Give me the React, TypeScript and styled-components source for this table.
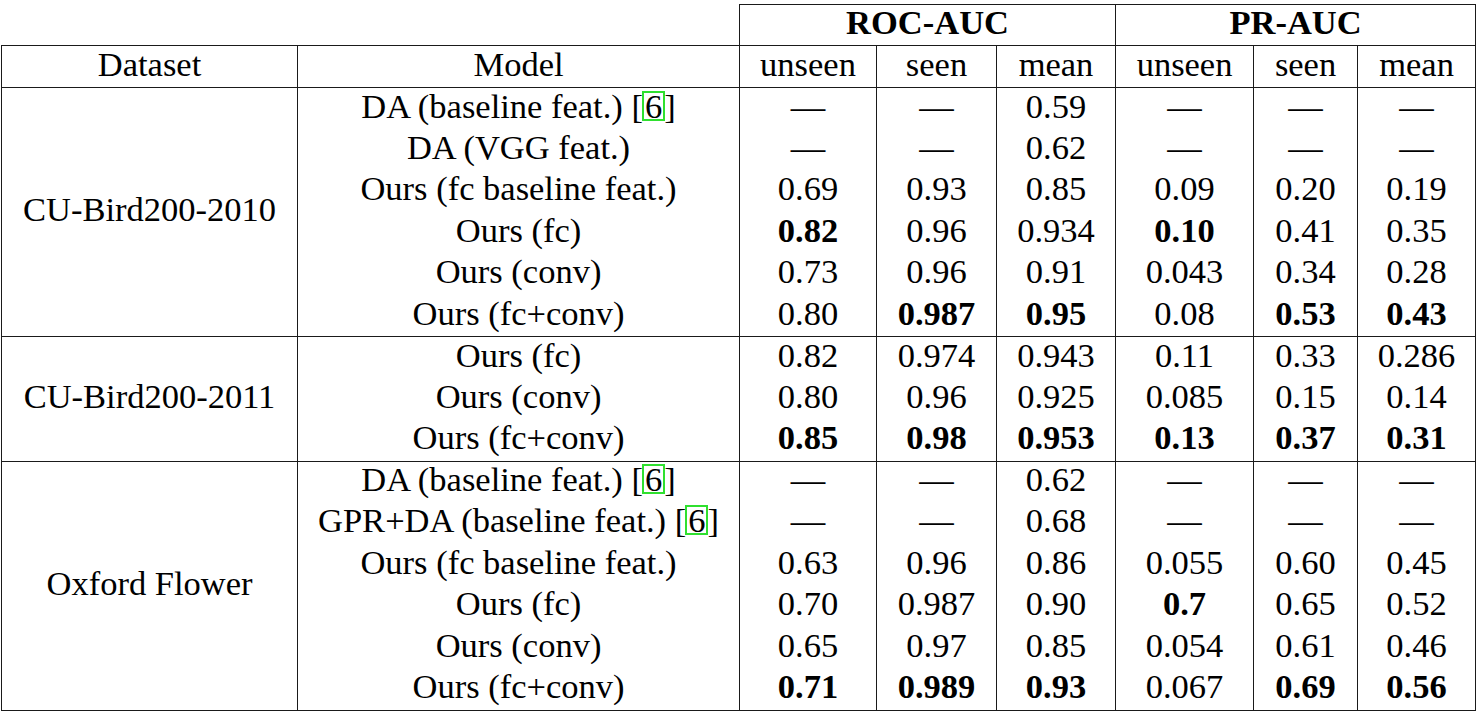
import React from 'react';
import styled, { createGlobalStyle } from 'styled-components';

interface ModelRow {
  model: string;
  cite?: string;
  values: string[]; // '*' prefix marks a bold (best) value
}

interface Group {
  dataset: string;
  rows: ModelRow[];
}

const D = '—';

const groups: Group[] = [
  {
    dataset: 'CU-Bird200-2010',
    rows: [
      { model: 'DA (baseline feat.)', cite: '6', values: [D, D, '0.59', D, D, D] },
      { model: 'DA (VGG feat.)', values: [D, D, '0.62', D, D, D] },
      { model: 'Ours (fc baseline feat.)', values: ['0.69', '0.93', '0.85', '0.09', '0.20', '0.19'] },
      { model: 'Ours (fc)', values: ['*0.82', '0.96', '0.934', '*0.10', '0.41', '0.35'] },
      { model: 'Ours (conv)', values: ['0.73', '0.96', '0.91', '0.043', '0.34', '0.28'] },
      { model: 'Ours (fc+conv)', values: ['0.80', '*0.987', '*0.95', '0.08', '*0.53', '*0.43'] },
    ],
  },
  {
    dataset: 'CU-Bird200-2011',
    rows: [
      { model: 'Ours (fc)', values: ['0.82', '0.974', '0.943', '0.11', '0.33', '0.286'] },
      { model: 'Ours (conv)', values: ['0.80', '0.96', '0.925', '0.085', '0.15', '0.14'] },
      { model: 'Ours (fc+conv)', values: ['*0.85', '*0.98', '*0.953', '*0.13', '*0.37', '*0.31'] },
    ],
  },
  {
    dataset: 'Oxford Flower',
    rows: [
      { model: 'DA (baseline feat.)', cite: '6', values: [D, D, '0.62', D, D, D] },
      { model: 'GPR+DA (baseline feat.)', cite: '6', values: [D, D, '0.68', D, D, D] },
      { model: 'Ours (fc baseline feat.)', values: ['0.63', '0.96', '0.86', '0.055', '0.60', '0.45'] },
      { model: 'Ours (fc)', values: ['0.70', '0.987', '0.90', '*0.7', '0.65', '0.52'] },
      { model: 'Ours (conv)', values: ['0.65', '0.97', '0.85', '0.054', '0.61', '0.46'] },
      { model: 'Ours (fc+conv)', values: ['*0.71', '*0.989', '*0.93', '0.067', '*0.69', '*0.56'] },
    ],
  },
];

const colWidths = [296, 442, 137, 120, 119, 138, 104, 118];
const subCols = ['unseen', 'seen', 'mean', 'unseen', 'seen', 'mean'];

const serif = '"Liberation Serif", "Times New Roman", Times, serif';

const GlobalStyle = createGlobalStyle`
  html, body {
    margin: 0;
    padding: 0;
    background: #fff;
  }
  body {
    font-family: ${serif};
    color: #000;
  }
`;

const Page = styled.div`
  padding: 4px 0 0 1px;
`;

const Table = styled.table`
  border-collapse: collapse;
  table-layout: fixed;
  width: 1474px;
  font-family: ${serif};
  font-size: 34.5px;
  line-height: 34px;
  color: #000;

  th,
  td {
    font-family: ${serif};
  }
`;

const HeadRow = styled.tr<{ $h: number }>`
  height: ${({ $h }) => $h}px;
`;

const Blank = styled.th`
  border: none;
  padding: 0;
`;

const MetricHead = styled.th`
  border: 1px solid #1a1a1a;
  font-weight: bold;
  text-align: center;
  vertical-align: middle;
  padding: 0 0 6px;
  white-space: nowrap;
`;

const ColHead = styled.th`
  border: 1px solid #1a1a1a;
  font-weight: normal;
  text-align: center;
  vertical-align: middle;
  padding: 0 0 6px;
  white-space: nowrap;
`;

const GroupBody = styled.tbody`
  border-top: 1px solid #1a1a1a;
  border-bottom: 1px solid #1a1a1a;
`;

const BodyRow = styled.tr`
  height: 41.5px;
`;

const DatasetCell = styled.td`
  border: 1px solid #1a1a1a;
  text-align: center;
  vertical-align: middle;
  padding: 0 0 6px;
  white-space: nowrap;
`;

const Cell = styled.td<{ $bold?: boolean }>`
  border-left: 1px solid #1a1a1a;
  border-right: 1px solid #1a1a1a;
  text-align: center;
  vertical-align: middle;
  padding: 0 0 6px;
  white-space: nowrap;
  font-weight: ${({ $bold }) => ($bold ? 'bold' : 'normal')};
`;

const CiteBox = styled.span`
  display: inline-block;
  border: 2px solid #2fe02f;
  line-height: 26px;
  padding: 0 1px;
  margin: 0 -1px;
`;

export default function App() {
  return (
    <Page>
      <GlobalStyle />
      <Table>
        <colgroup>
          {colWidths.map((w, i) => (
            <col key={i} style={{ width: w }} />
          ))}
        </colgroup>
        <thead>
          <HeadRow $h={41}>
            <Blank colSpan={2} />
            <MetricHead colSpan={3}>ROC-AUC</MetricHead>
            <MetricHead colSpan={3}>PR-AUC</MetricHead>
          </HeadRow>
          <HeadRow $h={42}>
            <ColHead>Dataset</ColHead>
            <ColHead>Model</ColHead>
            {subCols.map((c, i) => (
              <ColHead key={i}>{c}</ColHead>
            ))}
          </HeadRow>
        </thead>
        {groups.map((g) => (
          <GroupBody key={g.dataset}>
            {g.rows.map((r, ri) => (
              <BodyRow key={ri}>
                {ri === 0 && <DatasetCell rowSpan={g.rows.length}>{g.dataset}</DatasetCell>}
                <Cell>
                  {r.model}
                  {r.cite && (
                    <>
                      {' ['}
                      <CiteBox>{r.cite}</CiteBox>]
                    </>
                  )}
                </Cell>
                {r.values.map((v, vi) => {
                  const bold = v.startsWith('*');
                  return (
                    <Cell key={vi} $bold={bold}>
                      {bold ? v.slice(1) : v}
                    </Cell>
                  );
                })}
              </BodyRow>
            ))}
          </GroupBody>
        ))}
      </Table>
    </Page>
  );
}
